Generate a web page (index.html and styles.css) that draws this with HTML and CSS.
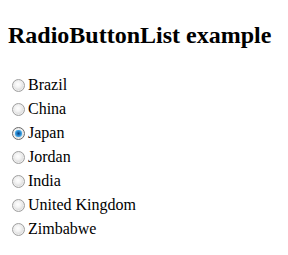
FILE: index.html
```html
<!DOCTYPE html>
<html>
<head>
<meta charset="utf-8">
<link rel="stylesheet" href="styles.css">
</head>
<body>
<h2 class="title">RadioButtonList example</h2>
<div class="list">
  <label class="item"><input type="radio" name="c" class="radio"><span>Brazil</span></label>
  <label class="item"><input type="radio" name="c" class="radio"><span>China</span></label>
  <label class="item"><input type="radio" name="c" class="radio" checked><span>Japan</span></label>
  <label class="item"><input type="radio" name="c" class="radio"><span>Jordan</span></label>
  <label class="item"><input type="radio" name="c" class="radio"><span>India</span></label>
  <label class="item"><input type="radio" name="c" class="radio"><span>United Kingdom</span></label>
  <label class="item"><input type="radio" name="c" class="radio"><span>Zimbabwe</span></label>
</div>
</body>
</html>
```
FILE: styles.css
```css
html, body {
  background: #fff;
}
body {
  margin: 0;
  padding: 21px 8px 8px 8px;
  font-family: "Liberation Serif", "Times New Roman", serif;
  font-size: 16px;
  color: #000;
}
.title {
  font-size: 24px;
  font-weight: bold;
  margin: 0;
  line-height: 28px;
}
.list {
  display: flex;
  flex-direction: column;
  margin-top: 24px;
  padding-left: 4px;
}
.item {
  display: flex;
  align-items: center;
  height: 24px;
  line-height: 24px;
}
.radio {
  -webkit-appearance: none;
  appearance: none;
  box-sizing: border-box;
  width: 13px;
  height: 13px;
  margin: 0 3px 0 0;
  border-radius: 50%;
  border: 1px solid #a0a0a0;
  background: radial-gradient(circle at 45% 40%, #ffffff 0%, #f2f2f2 35%, #d4d4d4 75%, #c2c2c2 100%);
  box-shadow: inset 0 0 0 1px #eeeeee;
}
.radio:checked {
  background:
    radial-gradient(circle at 50% 50%, #0a3f7a 0, #1a6fb8 1.5px, #3fa0e0 3px, #7cc4ef 3.6px, transparent 3.8px),
    radial-gradient(circle at 45% 40%, #ffffff 0%, #f2f2f2 35%, #d4d4d4 75%, #c2c2c2 100%);
  border-color: #6a6a6a;
}
```
